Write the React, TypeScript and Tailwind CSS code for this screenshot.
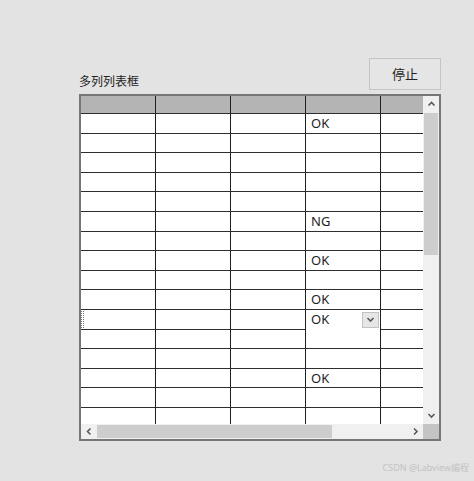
import React from "react";

const rows: { text: string; combo?: boolean }[] = [
    { text: "OK" },
    { text: "" },
    { text: "" },
    { text: "" },
    { text: "" },
    { text: "NG" },
    { text: "" },
    { text: "OK" },
    { text: "" },
    { text: "OK" },
    { text: "OK", combo: true },
    { text: "" },
    { text: "" },
    { text: "OK" },
    { text: "" },
    { text: "" },
];

const Chevron = ({ dir }: { dir: "up" | "down" | "left" | "right" }) => {
    const d = {
        up: "M1.5 5.5 L4.5 2.5 L7.5 5.5",
        down: "M1.5 3 L4.5 6 L7.5 3",
        left: "M5.5 1.5 L2.5 4.5 L5.5 7.5",
        right: "M3 1.5 L6 4.5 L3 7.5",
    }[dir];
    return (
        <svg width="9" height="9" viewBox="0 0 9 9">
            <path d={d} fill="none" stroke="#5a5a5a" strokeWidth="1.6" />
        </svg>
    );
};

export default function App() {
    return (
        <div
            className="relative w-[474px] h-[481px] bg-[#e3e3e3] overflow-hidden"
            style={{ fontFamily: '"Noto Sans", "Noto Sans CJK SC", sans-serif' }}
        >
            <div className="pl-[79px] pt-[58px] w-[441px]">
                {/* Title + stop button */}
                <div className="flex items-end justify-between">
                    <span
                        className="text-[12px] leading-[16px] text-[#222] mb-[1px]"
                        style={{ fontFamily: '"Noto Sans CJK SC", sans-serif' }}
                    >
                        多列列表框
                    </span>
                    <button
                        className="w-[72px] h-[32px] border border-[#c4c4c4] bg-[#e5e5e5] text-[13px] text-[#222] flex items-center justify-center"
                        style={{ fontFamily: '"Noto Sans CJK SC", sans-serif' }}
                    >
                        停止
                    </button>
                </div>

                {/* Multicolumn listbox */}
                <div className="mt-[4px] w-[362px] h-[347px] border-2 border-[#767676] flex flex-col bg-white">
                    <div className="flex flex-1 min-h-0">
                        <div className="flex-1 overflow-hidden">
                            {/* Header */}
                            <div className="flex h-[18px] bg-[#b4b4b4] border-b border-[#2e2e2e]">
                                {[0, 1, 2, 3].map((i) => (
                                    <div key={i} className="w-[75px] shrink-0 border-r border-[#1e1e1e]" />
                                ))}
                                <div className="flex-1" />
                            </div>
                            {/* Rows */}
                            {rows.map((r, idx) => (
                                <div key={idx} className="flex h-[19.6px] text-[13px] text-[#1e1e1e]">
                                    <div className="relative w-[75px] shrink-0 border-r border-b border-r-[#1e1e1e] border-b-[#2e2e2e]">
                                        {idx === 10 && (
                                            <div className="absolute left-0 top-[1px] w-[3px] h-[17px] border border-dotted border-[#777]" />
                                        )}
                                    </div>
                                    <div className="w-[75px] shrink-0 border-r border-b border-r-[#1e1e1e] border-b-[#2e2e2e]" />
                                    <div className="w-[75px] shrink-0 border-r border-b border-r-[#1e1e1e] border-b-[#2e2e2e]" />
                                    <div
                                        className={
                                            "relative w-[75px] shrink-0 border-r border-r-[#1e1e1e] pl-[5px] leading-[18px] " +
                                            (r.combo ? "" : "border-b border-b-[#2e2e2e]")
                                        }
                                    >
                                        {r.text}
                                        {r.combo && (
                                            <div className="absolute right-[1px] top-[2px] w-[17px] h-[16px] bg-[#e6e6e6] border border-[#c2c2c2] flex items-center justify-center">
                                                <Chevron dir="down" />
                                            </div>
                                        )}
                                    </div>
                                    <div className="flex-1 border-b border-b-[#2e2e2e]" />
                                </div>
                            ))}
                        </div>
                        {/* Vertical scrollbar */}
                        <div className="w-[16px] bg-[#f0f0f0] flex flex-col">
                            <div className="h-[17px] flex items-center justify-center">
                                <Chevron dir="up" />
                            </div>
                            <div className="h-[142px] mx-[1px] bg-[#cdcdcd]" />
                            <div className="flex-1" />
                            <div className="h-[17px] flex items-center justify-center">
                                <Chevron dir="down" />
                            </div>
                        </div>
                    </div>
                    {/* Horizontal scrollbar */}
                    <div className="flex h-[15px]">
                        <div className="flex-1 bg-[#f0f0f0] flex items-center">
                            <div className="w-[16px] flex items-center justify-center">
                                <Chevron dir="left" />
                            </div>
                            <div className="w-[235px] h-[13px] bg-[#cdcdcd]" />
                            <div className="flex-1" />
                            <div className="w-[16px] flex items-center justify-center">
                                <Chevron dir="right" />
                            </div>
                        </div>
                        <div className="w-[16px] bg-[#c4c4c4]" />
                    </div>
                </div>
            </div>

            {/* Watermark */}
            <div
                className="absolute right-[5px] bottom-[7px] text-[9px] text-[#c2c2c2]"
                style={{ fontFamily: '"Noto Sans", "Noto Sans CJK SC", sans-serif' }}
            >
                CSDN @Labview编程
            </div>
        </div>
    );
}
